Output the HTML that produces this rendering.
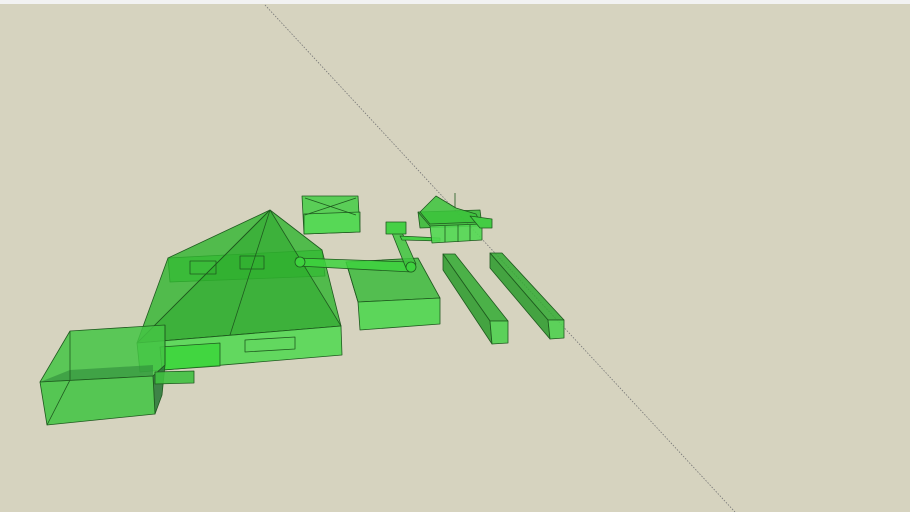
<!DOCTYPE html>
<html><head><style>
html,body{margin:0;padding:0;width:910px;height:512px;overflow:hidden;background:#d6d3bf;}
svg{display:block}
</style></head><body>
<svg width="910" height="512" viewBox="0 0 910 512" xmlns="http://www.w3.org/2000/svg">
<rect width="910" height="512" fill="#d6d3bf"/>
<rect width="910" height="4" fill="#f2f2f2"/>
<line x1="265" y1="5" x2="735" y2="512" stroke="#777" stroke-width="0.8" stroke-dasharray="1.5,1.5"/>
<g stroke="#1f5a1f" stroke-width="0.8" stroke-linejoin="round">
<!-- pyramid building -->
<polygon points="168,258 322,250 325,276 170,282" fill="#3fd03f" fill-opacity="0.75"/>
<polygon points="270,210 168,258 137,343 341,326 322,250" fill="#2fb52f" fill-opacity="0.8"/>
<polygon points="270,210 137,343 341,326" fill="#2aa82a" fill-opacity="0.5"/>
<line x1="270" y1="210" x2="230" y2="335"/>
<line x1="270" y1="210" x2="137" y2="343"/>
<polygon points="137,343 341,326 342,355 140,372" fill="#4dd84d" fill-opacity="0.85"/>
<polygon points="245,340 295,337 295,349 245,352" fill="none"/>
<rect x="190" y="261" width="26" height="13" fill="none"/>
<rect x="240" y="256" width="24" height="13" fill="none"/>
<polygon points="160,347 220,343 220,366 162,370" fill="#33d633" fill-opacity="0.7"/>
<!-- left box -->
<polygon points="70,331 165,325 165,365 153,376 40,382" fill="#44c444" fill-opacity="0.85"/>
<polygon points="70,370 153,365 153,376 40,382" fill="#2e8a3a" fill-opacity="0.6" stroke="none"/>
<polygon points="153,376 165,365 162,395 155,414" fill="#2e7a3a" fill-opacity="0.9"/>
<polygon points="40,382 153,376 155,414 47,425" fill="#47c447" fill-opacity="0.9"/>
<line x1="47" y1="425" x2="70" y2="380"/>
<line x1="70" y1="331" x2="70" y2="380"/>
<line x1="165" y1="325" x2="165" y2="365"/>
<polygon points="155,372 194,371 194,383 155,384" fill="#40c040" fill-opacity="0.9"/>
<!-- small box top -->
<polygon points="302,196 358,196 360,232 304,234" fill="#44cc44" fill-opacity="0.85"/>
<polygon points="304,214 360,212 360,232 304,234" fill="#55dd55" fill-opacity="0.7"/>
<line x1="305" y1="198" x2="356" y2="215"/><line x1="305" y1="215" x2="356" y2="198"/>
<!-- middle box -->
<polygon points="346,262 418,258 440,298 358,302" fill="#3cba3c" fill-opacity="0.85"/>
<polygon points="358,302 440,298 440,324 360,330" fill="#4fd64f" fill-opacity="0.9"/>
<line x1="346" y1="262" x2="358" y2="302"/>
<!-- arm beams -->
<polygon points="296,258 410,262 412,272 298,266" fill="#3ed23e" fill-opacity="0.85"/>
<polygon points="390,228 400,228 416,264 406,268" fill="#3ec63e" fill-opacity="0.85"/>
<circle cx="300" cy="262" r="5" fill="#3ed23e"/>
<circle cx="411" cy="267" r="5" fill="#3ed23e"/>
<rect x="386" y="222" width="20" height="12" fill="#46d046"/>
<polygon points="400,236 440,238 440,241 402,240" fill="#46d046"/>
<!-- right complex -->
<polygon points="418,212 480,210 482,226 420,228" fill="#30b830" fill-opacity="0.85"/>
<polygon points="420,212 436,196 456,208 476,214 480,222 430,224" fill="#3cc43c" fill-opacity="0.85"/>
<polygon points="430,226 482,224 482,240 432,243" fill="#52d852" fill-opacity="0.9"/>
<line x1="418" y1="212" x2="430" y2="226"/>
<line x1="445" y1="226" x2="445" y2="242"/><line x1="458" y1="225" x2="458" y2="242"/><line x1="470" y1="225" x2="470" y2="241"/>
<polygon points="470,216 492,219 492,228 480,228" fill="#44cc44"/>
<line x1="455" y1="193" x2="455" y2="208"/>
<!-- beams -->
<polygon points="443,254 455,254 508,321 490,321" fill="#32aa32" fill-opacity="0.85"/>
<polygon points="443,254 490,321 492,344 443,270" fill="#2a9a2a" fill-opacity="0.85"/>
<polygon points="490,321 508,321 508,343 492,344" fill="#4fd04f" fill-opacity="0.9"/>
<polygon points="490,253 502,253 564,320 548,320" fill="#32aa32" fill-opacity="0.85"/>
<polygon points="490,253 548,320 550,339 490,268" fill="#2a9a2a" fill-opacity="0.85"/>
<polygon points="548,320 564,320 564,338 550,339" fill="#4fd04f" fill-opacity="0.9"/>
</g>
</svg>
</body></html>
